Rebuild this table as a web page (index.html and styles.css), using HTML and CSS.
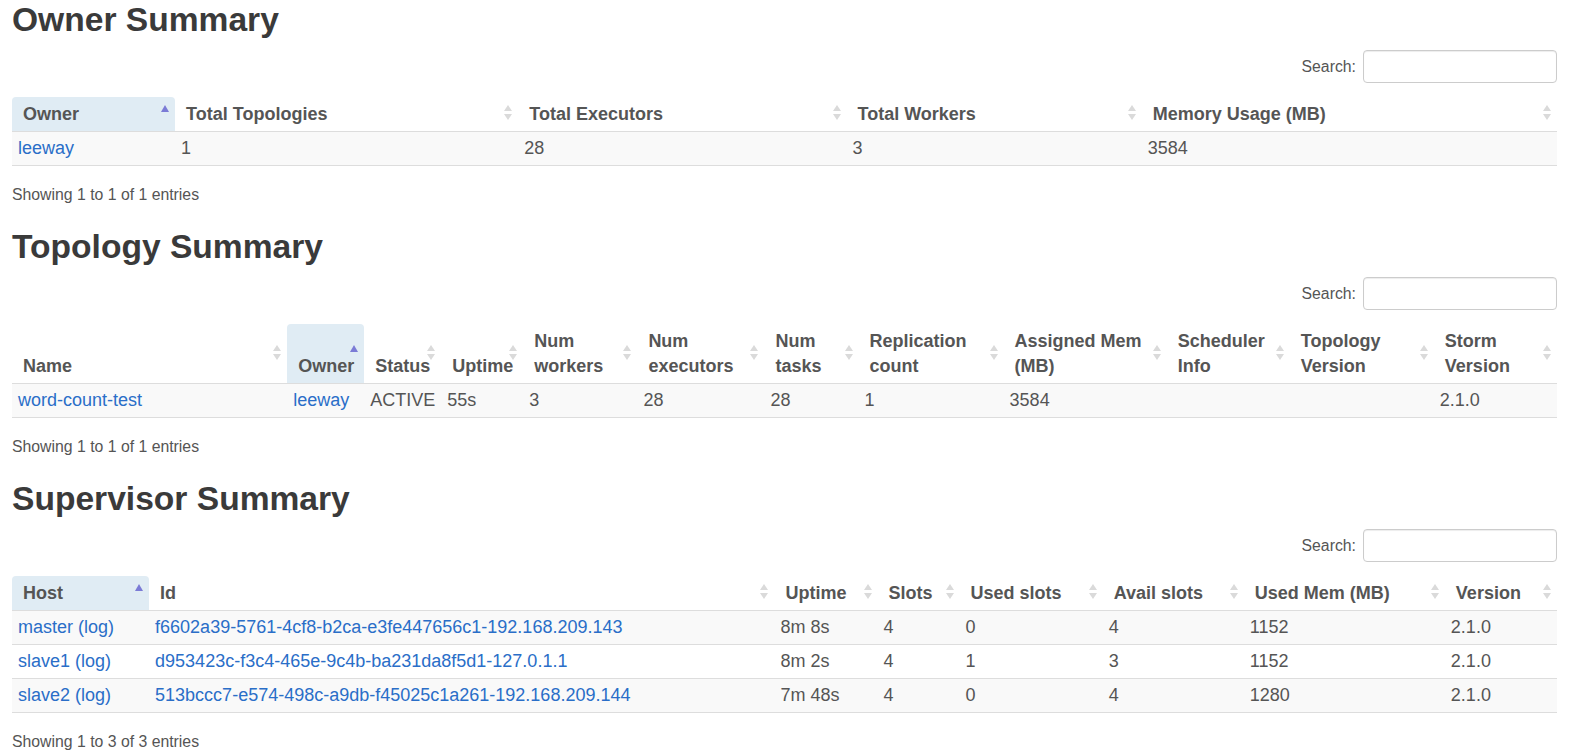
FILE: index.html
```html
<!DOCTYPE html>
<html lang="en">
<head>
<meta charset="utf-8">
<title>Storm UI</title>
<link rel="stylesheet" href="styles.css">
</head>
<body>
<div class="container">

  <section class="summary">
    <h2 class="title">Owner Summary</h2>
    <div class="dt-filter"><label>Search: <input type="search" class="search-input"></label></div>
    <table class="dt">
      <colgroup><col style="width:163px"><col style="width:343px"><col style="width:328px"><col style="width:295px"><col style="width:415px"></colgroup>
      <thead>
        <tr>
          <th class="sorting-asc">Owner</th>
          <th class="sorting">Total Topologies</th>
          <th class="sorting">Total Executors</th>
          <th class="sorting">Total Workers</th>
          <th class="sorting">Memory Usage (MB)</th>
        </tr>
      </thead>
      <tbody>
        <tr><td><a href="#">leeway</a></td><td>1</td><td>28</td><td>3</td><td>3584</td></tr>
      </tbody>
    </table>
    <div class="dt-info">Showing 1 to 1 of 1 entries</div>
  </section>

  <section class="summary">
    <h2 class="title">Topology Summary</h2>
    <div class="dt-filter"><label>Search: <input type="search" class="search-input"></label></div>
    <table class="dt">
      <colgroup><col style="width:275px"><col style="width:77px"><col style="width:77px"><col style="width:82px"><col style="width:114px"><col style="width:127px"><col style="width:94px"><col style="width:145px"><col style="width:163px"><col style="width:123px"><col style="width:144px"><col style="width:123px"></colgroup>
      <thead>
        <tr>
          <th class="sorting">Name</th>
          <th class="sorting-asc">Owner</th>
          <th class="sorting">Status</th>
          <th class="sorting">Uptime</th>
          <th class="sorting">Num workers</th>
          <th class="sorting">Num executors</th>
          <th class="sorting">Num tasks</th>
          <th class="sorting">Replication count</th>
          <th class="sorting">Assigned Mem (MB)</th>
          <th class="sorting">Scheduler Info</th>
          <th class="sorting">Topology Version</th>
          <th class="sorting">Storm Version</th>
        </tr>
      </thead>
      <tbody>
        <tr><td><a href="#">word-count-test</a></td><td><a href="#">leeway</a></td><td>ACTIVE</td><td>55s</td><td>3</td><td>28</td><td>28</td><td>1</td><td>3584</td><td></td><td></td><td>2.1.0</td></tr>
      </tbody>
    </table>
    <div class="dt-info">Showing 1 to 1 of 1 entries</div>
  </section>

  <section class="summary">
    <h2 class="title">Supervisor Summary</h2>
    <div class="dt-filter"><label>Search: <input type="search" class="search-input"></label></div>
    <table class="dt">
      <colgroup><col style="width:137px"><col style="width:625px"><col style="width:103px"><col style="width:82px"><col style="width:143px"><col style="width:141px"><col style="width:201px"><col style="width:112px"></colgroup>
      <thead>
        <tr>
          <th class="sorting-asc">Host</th>
          <th class="sorting">Id</th>
          <th class="sorting">Uptime</th>
          <th class="sorting">Slots</th>
          <th class="sorting">Used slots</th>
          <th class="sorting">Avail slots</th>
          <th class="sorting">Used Mem (MB)</th>
          <th class="sorting">Version</th>
        </tr>
      </thead>
      <tbody>
        <tr><td><a href="#">master</a> <a href="#">(log)</a></td><td><a href="#">f6602a39-5761-4cf8-b2ca-e3fe447656c1-192.168.209.143</a></td><td>8m 8s</td><td>4</td><td>0</td><td>4</td><td>1152</td><td>2.1.0</td></tr>
        <tr><td><a href="#">slave1</a> <a href="#">(log)</a></td><td><a href="#">d953423c-f3c4-465e-9c4b-ba231da8f5d1-127.0.1.1</a></td><td>8m 2s</td><td>4</td><td>1</td><td>3</td><td>1152</td><td>2.1.0</td></tr>
        <tr><td><a href="#">slave2</a> <a href="#">(log)</a></td><td><a href="#">513bccc7-e574-498c-a9db-f45025c1a261-192.168.209.144</a></td><td>7m 48s</td><td>4</td><td>0</td><td>4</td><td>1280</td><td>2.1.0</td></tr>
      </tbody>
    </table>
    <div class="dt-info">Showing 1 to 3 of 3 entries</div>
  </section>

</div>
</body>
</html>
```
FILE: styles.css
```css
html, body {
  margin: 0;
  padding: 0;
  background: #fff;
}
body {
  font-family: "Liberation Sans", Arial, Helvetica, sans-serif;
  font-size: 18px;
  color: #555;
}
.container {
  padding: 0 12px 0 12px;
}
.summary + .summary {
  margin-top: 21px;
}
.title {
  margin: 0;
  font-size: 33.6px;
  line-height: 40px;
  font-weight: bold;
  color: #3a3a3a;
}
.dt-filter {
  margin-top: 10px;
  display: flex;
  justify-content: flex-end;
}
.dt-filter label {
  display: flex;
  align-items: center;
  gap: 7px;
  font-size: 15.8px;
  color: #555;
}
.search-input {
  box-sizing: border-box;
  width: 194px;
  height: 33px;
  border: 1px solid #ccc;
  border-radius: 4px;
  padding: 4px 8px;
  margin: 0;
  font: inherit;
  outline: none;
  box-shadow: inset 0 1px 1px rgba(0,0,0,0.075);
}
.dt {
  margin-top: 14px;
  width: 100%;
  table-layout: fixed;
  border-collapse: collapse;
  border-spacing: 0;
}
.dt th {
  position: relative;
  text-align: left;
  vertical-align: bottom;
  padding: 5px 18px 4px 11px;
  line-height: 25px;
  font-weight: bold;
  color: #555;
  border-bottom: 1px solid #ddd;
}
.dt th.sorting-asc {
  background: #e0ecf4;
  border-radius: 4px 4px 0 0;
}
.dt th.sorting::before,
.dt th.sorting::after {
  content: "";
  position: absolute;
  right: 6px;
  width: 0;
  height: 0;
  border-left: 4px solid transparent;
  border-right: 4px solid transparent;
}
.dt th.sorting::before {
  top: calc(50% - 9px);
  border-bottom: 6px solid #dadada;
}
.dt th.sorting::after {
  top: calc(50% + 0px);
  border-top: 6px solid #dadada;
}
.dt th.sorting-asc::after {
  content: "";
  position: absolute;
  right: 6px;
  top: calc(50% - 9px);
  width: 0;
  height: 0;
  border-left: 4.5px solid transparent;
  border-right: 4.5px solid transparent;
  border-bottom: 7px solid #7b7bd6;
}
.dt td {
  padding: 4px 6px;
  line-height: 25px;
  border-bottom: 1px solid #ddd;
  white-space: nowrap;
  overflow: hidden;
}
.dt tbody tr:nth-child(odd) td {
  background: #f9f9f9;
}
.dt a {
  color: #2a6ec8;
  text-decoration: none;
}
.dt-info {
  margin-top: 18px;
  font-size: 15.8px;
  line-height: 22px;
  color: #555;
}
```
